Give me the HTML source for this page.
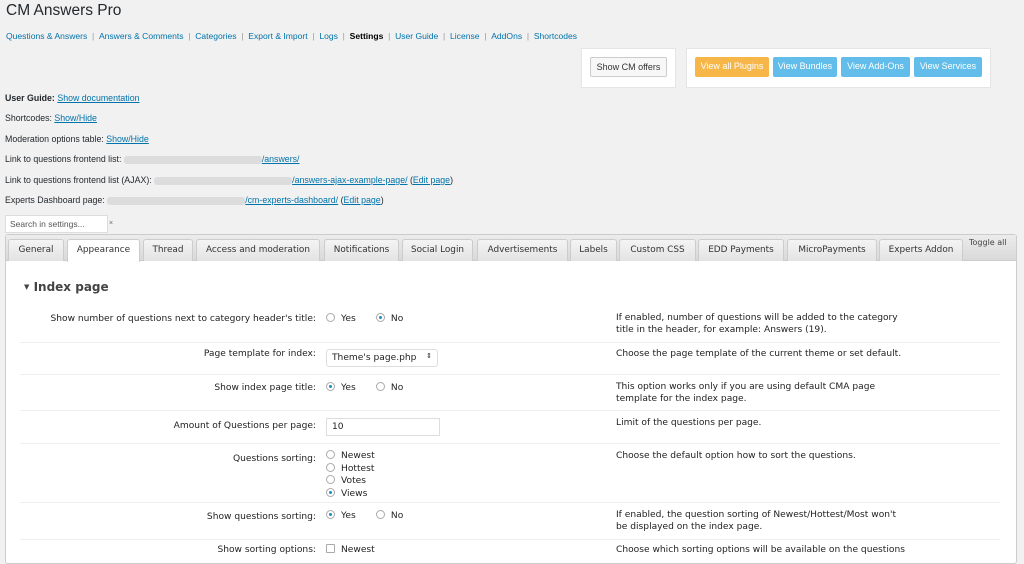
<!DOCTYPE html>
<html><head><meta charset="utf-8"><style>
*{box-sizing:border-box;margin:0;padding:0}
body{width:1024px;height:551px;overflow:hidden;background:#f1f1f1;font-family:"Liberation Sans",sans-serif;color:#23282d;position:relative}
.a{position:absolute;white-space:nowrap}
h1{position:absolute;left:6px;top:2px;font-size:15.5px;font-weight:normal;color:#23282d}
.nav{left:6px;top:31px;font-size:8.55px;color:#999}
.nav a{color:#0073aa;text-decoration:none}
.nav b{color:#000}
.box{position:absolute;background:#fff;border:1px solid #e5e5e5}
.btn{position:absolute;height:20px;border-radius:2px;font-size:9px;line-height:19px;text-align:center;color:#fff}
.info{left:5px;font-size:8.8px;color:#23282d}
.info a{color:#0073aa;text-decoration:underline}
.blur{display:inline-block;height:8px;background:#dcdcdc;vertical-align:middle;border-radius:3px}
.v{font-family:"DejaVu Sans",sans-serif}
.tab{position:absolute;top:239px;height:22px;border:1px solid #ccc;border-bottom:none;background:linear-gradient(#f4f4f4,#e3e3e3);font-size:8.9px;line-height:21px;text-align:center;color:#333;font-family:"DejaVu Sans",sans-serif;border-radius:3px 3px 0 0}
.lbl{font-size:9.1px;font-family:"DejaVu Sans",sans-serif;color:#222;text-align:right;right:708px}
.ctl{left:326px;font-size:9.1px;font-family:"DejaVu Sans",sans-serif;color:#222}
.desc{left:616px;font-size:9.1px;font-family:"DejaVu Sans",sans-serif;color:#222;line-height:12px}
.sep{position:absolute;left:20px;width:980px;height:1px;background:#eee}
.r{display:inline-block;width:9px;height:9px;border:1px solid #aaa;border-radius:50%;vertical-align:-1px;margin-right:6px;background:#fff;position:relative}
.r.on::after{content:"";position:absolute;left:2px;top:2px;width:3px;height:3px;border-radius:50%;background:#1e8cbe}
</style></head><body>
<h1>CM Answers Pro</h1>
<div class="a nav"><a>Questions &amp; Answers</a> &nbsp;| &nbsp;<a>Answers &amp; Comments</a> &nbsp;| &nbsp;<a>Categories</a> &nbsp;| &nbsp;<a>Export &amp; Import</a> &nbsp;| &nbsp;<a>Logs</a> &nbsp;| &nbsp;<b>Settings</b> &nbsp;| &nbsp;<a>User Guide</a> &nbsp;| &nbsp;<a>License</a> &nbsp;| &nbsp;<a>AddOns</a> &nbsp;| &nbsp;<a>Shortcodes</a></div>
<div class="box" style="left:581px;top:48px;width:95px;height:40px"></div>
<div class="btn" style="left:590px;top:57px;width:77px;background:#f7f7f7;border:1px solid #ccc;color:#333">Show CM offers</div>
<div class="box" style="left:686px;top:48px;width:305px;height:40px"></div>
<div class="btn" style="left:695px;top:57px;width:74px;background:#f6b648">View all Plugins</div>
<div class="btn" style="left:773px;top:57px;width:64px;background:#62bdea">View Bundles</div>
<div class="btn" style="left:841px;top:57px;width:69px;background:#62bdea">View Add-Ons</div>
<div class="btn" style="left:914px;top:57px;width:68px;background:#62bdea">View Services</div>
<div class="a info" style="top:93px"><b>User Guide:</b> <a>Show documentation</a></div>
<div class="a info" style="top:113px">Shortcodes: <a>Show/Hide</a></div>
<div class="a info" style="top:134px">Moderation options table: <a>Show/Hide</a></div>
<div class="a info" style="top:154px">Link to questions frontend list: <span class="blur" style="width:138px"></span><a>/answers/</a></div>
<div class="a info" style="top:175px">Link to questions frontend list (AJAX): <span class="blur" style="width:138px"></span><a>/answers-ajax-example-page/</a> (<a>Edit page</a>)</div>
<div class="a info" style="top:195px">Experts Dashboard page: <span class="blur" style="width:138px"></span><a>/cm-experts-dashboard/</a> (<a>Edit page</a>)</div>
<div class="a" style="left:5px;top:215px;width:103px;height:18px;background:#fff;border:1px solid #ddd;font-size:8.5px;color:#555;padding:3px 4px">Search in settings...</div>
<div class="a" style="left:109px;top:220px;font-size:7px;color:#666">×</div>
<div class="a" style="left:5px;top:234px;width:1012px;height:330px;background:#fff;border:1px solid #ccc;border-radius:3px"></div>
<div class="a" style="left:6px;top:235px;width:1010px;height:26px;background:linear-gradient(#ececec,#d9d9d9);border-bottom:1px solid #ccc"></div>
<div class="tab" style="left:8px;width:56px">General</div>
<div class="tab" style="left:67px;width:73px;background:#fff;height:23px">Appearance</div>
<div class="tab" style="left:143px;width:50px">Thread</div>
<div class="tab" style="left:196px;width:124px">Access and moderation</div>
<div class="tab" style="left:324px;width:75px">Notifications</div>
<div class="tab" style="left:402px;width:71px">Social Login</div>
<div class="tab" style="left:477px;width:91px">Advertisements</div>
<div class="tab" style="left:570px;width:47px">Labels</div>
<div class="tab" style="left:619px;width:77px">Custom CSS</div>
<div class="tab" style="left:698px;width:86px">EDD Payments</div>
<div class="tab" style="left:787px;width:90px">MicroPayments</div>
<div class="tab" style="left:879px;width:84px">Experts Addon</div>
<div class="a v" style="left:969px;top:238px;font-size:8px;color:#444">Toggle all</div>
<div class="a v" style="left:24px;top:280px;font-size:12px;font-weight:bold;color:#444"><span style="font-size:7px;vertical-align:2px">▼</span> Index page</div>

<div class="a lbl" style="top:314px">Show number of questions next to category header's title:</div>
<div class="a ctl" style="top:313px"><span class="r"></span>Yes &nbsp; &nbsp; &nbsp; <span class="r on"></span>No</div>
<div class="a desc" style="top:312px">If enabled, number of questions will be added to the category<br>title in the header, for example: Answers (19).</div>
<div class="sep" style="top:342px"></div>
<div class="a lbl" style="top:349px">Page template for index:</div>
<div class="a ctl" style="top:349px;width:112px;height:18px;border:1px solid #ddd;border-radius:3px;top:349px;padding:3px 5px">Theme's page.php<span style="position:absolute;right:5px;top:2px;font-size:7px">⇕</span></div>
<div class="a desc" style="top:348px">Choose the page template of the current theme or set default.</div>
<div class="sep" style="top:374px"></div>
<div class="a lbl" style="top:383px">Show index page title:</div>
<div class="a ctl" style="top:382px"><span class="r on"></span>Yes &nbsp; &nbsp; &nbsp; <span class="r"></span>No</div>
<div class="a desc" style="top:381px">This option works only if you are using default CMA page<br>template for the index page.</div>
<div class="sep" style="top:410px"></div>
<div class="a lbl" style="top:421px">Amount of Questions per page:</div>
<div class="a ctl" style="top:418px;width:114px;height:18px;border:1px solid #ddd;padding:3px 5px">10</div>
<div class="a desc" style="top:417px">Limit of the questions per page.</div>
<div class="sep" style="top:443px"></div>
<div class="a lbl" style="top:454px">Questions sorting:</div>
<div class="a ctl" style="top:450px;line-height:11.5px"><span class="r"></span>Newest<br><span class="r"></span>Hottest<br><span class="r"></span>Votes<br><span class="r on"></span>Views</div>
<div class="a desc" style="top:450px">Choose the default option how to sort the questions.</div>
<div class="sep" style="top:502px"></div>
<div class="a lbl" style="top:512px">Show questions sorting:</div>
<div class="a ctl" style="top:510px"><span class="r on"></span>Yes &nbsp; &nbsp; &nbsp; <span class="r"></span>No</div>
<div class="a desc" style="top:509px">If enabled, the question sorting of Newest/Hottest/Most won't<br>be displayed on the index page.</div>
<div class="sep" style="top:539px"></div>
<div class="a lbl" style="top:545px">Show sorting options:</div>
<div class="a ctl" style="top:544px"><span class="r" style="border-radius:1px"></span>Newest</div>
<div class="a desc" style="top:544px">Choose which sorting options will be available on the questions</div>
</body></html>
